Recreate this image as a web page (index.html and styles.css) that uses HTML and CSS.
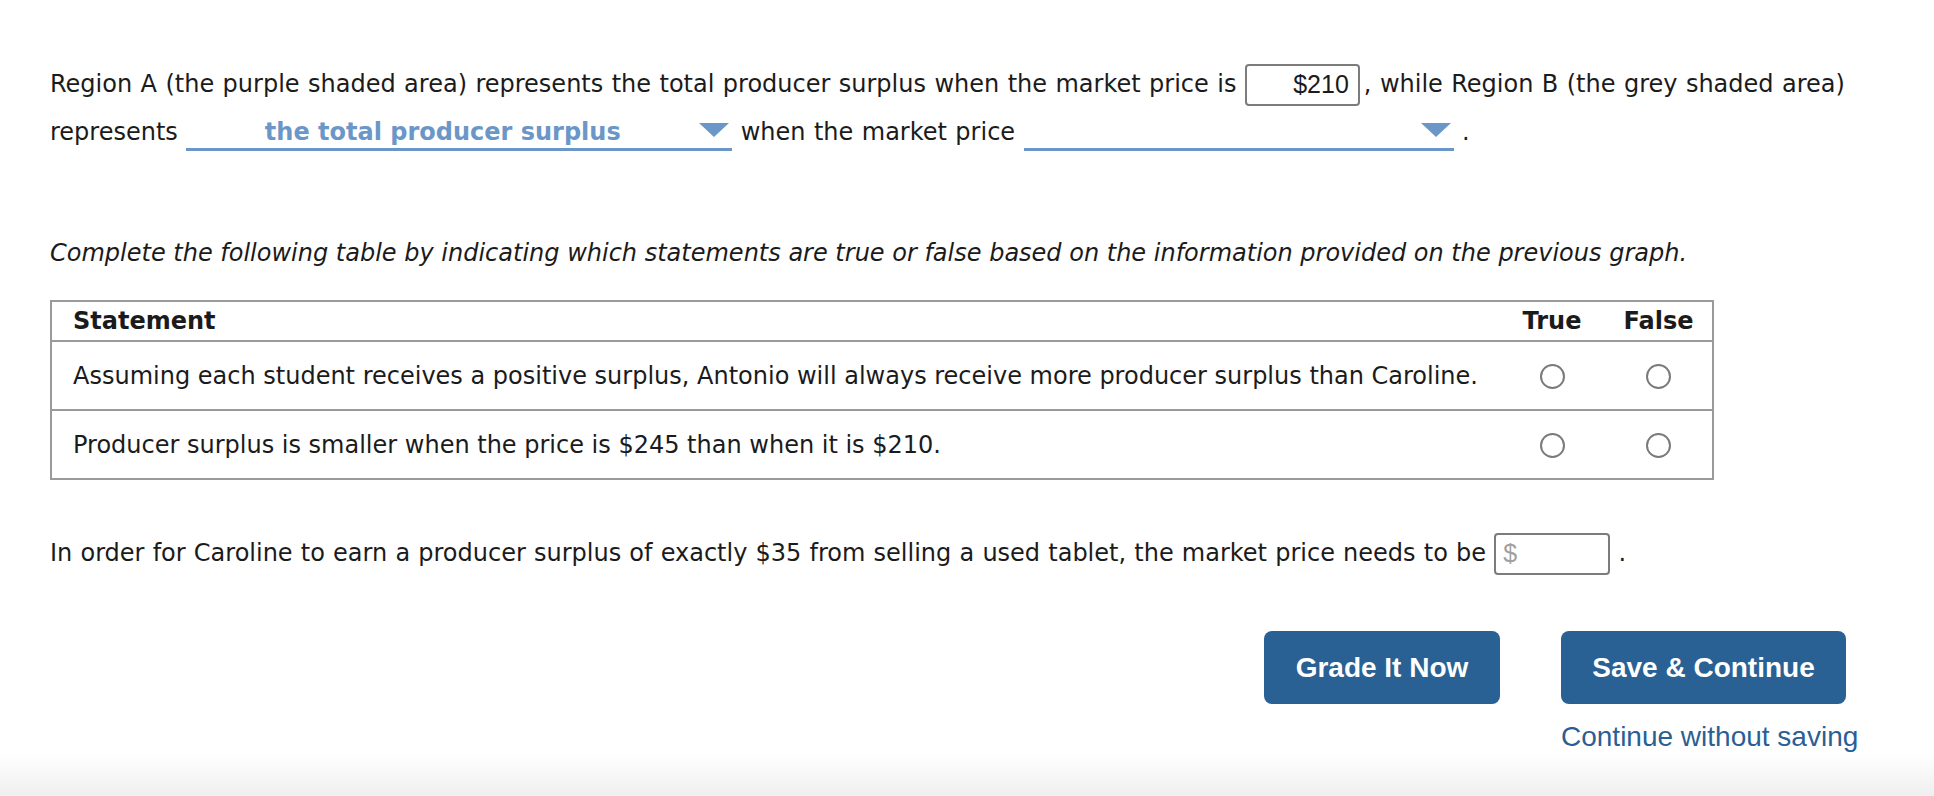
FILE: index.html
```html
<!DOCTYPE html>
<html lang="en">
<head>
<meta charset="utf-8">
<title>Producer surplus</title>
<link rel="stylesheet" href="styles.css">
</head>
<body>
<div class="page">
  <p class="q1">Region A (the purple shaded area) represents the total producer surplus when the market price is <span class="numbox">$210</span>, while Region B (the grey shaded area) represents <span class="dropdown dd1"><span class="dd-text">the total producer surplus</span><span class="caret"></span></span> when the market price <span class="dropdown dd2"><span class="dd-text">&nbsp;</span><span class="caret"></span></span> .</p>

  <p class="instr">Complete the following table by indicating which statements are true or false based on the information provided on the previous graph.</p>

  <table class="tf-table">
    <thead>
      <tr class="head-row">
        <th class="stmt">Statement</th>
        <th class="tf">True</th>
        <th class="tf tf-false">False</th>
      </tr>
    </thead>
    <tbody>
      <tr class="body-row">
        <td class="stmt">Assuming each student receives a positive surplus, Antonio will always receive more producer surplus than Caroline.</td>
        <td class="tf"><span class="radio"></span></td>
        <td class="tf tf-false"><span class="radio"></span></td>
      </tr>
      <tr class="body-row">
        <td class="stmt">Producer surplus is smaller when the price is $245 than when it is $210.</td>
        <td class="tf"><span class="radio"></span></td>
        <td class="tf tf-false"><span class="radio"></span></td>
      </tr>
    </tbody>
  </table>

  <p class="q3">In order for Caroline to earn a producer surplus of exactly $35 from selling a used tablet, the market price needs to be <span class="inputbox"><span class="dollar">$</span></span> .</p>

  <div class="actions">
    <button class="btn btn-grade" type="button">Grade It Now</button>
    <div class="save-col">
      <button class="btn btn-save" type="button">Save &amp; Continue</button>
      <a class="skip-link" href="#">Continue without saving</a>
    </div>
  </div>
</div>
</body>
</html>
```

FILE: styles.css
```css
html, body {
  margin: 0;
  padding: 0;
  background: #fff;
}

body {
  font-family: "DejaVu Sans", Verdana, sans-serif;
  font-size: 24px;
  color: #1b1b1b;
}

.page {
  box-sizing: border-box;
  min-height: 796px;
  padding: 60px 0 0 50px;
  background: linear-gradient(to bottom, #ffffff 0, #ffffff calc(100% - 42px), #efefef 100%);
}

.q1 {
  margin: 0;
  width: 1810px;
  line-height: 48px;
  word-spacing: 0.8px;
}

.numbox {
  display: inline-block;
  box-sizing: border-box;
  width: 115px;
  height: 42px;
  border: 2px solid #7c7c7c;
  border-radius: 4px;
  padding-right: 9px;
  margin-right: 4px;
  font-family: "Liberation Sans", Arial, sans-serif;
  font-size: 25px;
  line-height: 37px;
  text-align: right;
  vertical-align: middle;
  color: #1b1b1b;
}

.dropdown {
  display: inline-flex;
  box-sizing: border-box;
  align-items: flex-end;
  line-height: 26px;
  padding-bottom: 3px;
  border-bottom: 3px solid #6a97c7;
  word-spacing: 0;
}

.dd1 {
  width: 546px;
}

.dd2 {
  width: 430px;
}

.dd-text {
  flex: 1;
  text-align: center;
  font-weight: bold;
  color: #6a97c7;
}

.caret {
  width: 0;
  height: 0;
  border-left: 15px solid transparent;
  border-right: 15px solid transparent;
  border-top: 14px solid #6a97c7;
  margin: 0 3px 8px 0;
}

.instr {
  margin: 73px 0 0;
  line-height: 48px;
  font-style: italic;
}

.tf-table {
  margin-top: 23px;
  width: 1664px;
  border-collapse: collapse;
  border: 2px solid #9a9a9a;
}

.tf-table th,
.tf-table td {
  padding: 0;
  border-bottom: 2px solid #9a9a9a;
}

.head-row {
  height: 40px;
}

.body-row {
  height: 69px;
}

.tf-table th {
  font-weight: bold;
}

.stmt {
  text-align: left;
  padding-left: 21px !important;
}

.tf {
  width: 106px;
  text-align: center;
}

.tf-false {
  width: 107px;
}

.radio {
  display: inline-block;
  box-sizing: border-box;
  width: 25px;
  height: 25px;
  border: 2px solid #7a7a7a;
  border-radius: 50%;
  vertical-align: middle;
}

.q3 {
  margin: 49px 0 0;
  line-height: 48px;
  word-spacing: 0.55px;
}

.inputbox {
  display: inline-block;
  box-sizing: border-box;
  width: 116px;
  height: 42px;
  border: 2px solid #7c7c7c;
  border-radius: 4px;
  padding-left: 7px;
  vertical-align: middle;
  font-family: "Liberation Sans", Arial, sans-serif;
  font-size: 25px;
  line-height: 37px;
}

.dollar {
  color: #a0a0a0;
}

.actions {
  margin-top: 54px;
  width: 1806px;
  display: flex;
  justify-content: flex-end;
  align-items: flex-start;
  gap: 61px;
}

.btn {
  display: flex;
  align-items: center;
  justify-content: center;
  height: 73px;
  border: none;
  border-radius: 8px;
  background: #296194;
  color: #fff;
  font-family: "Liberation Sans", Arial, sans-serif;
  font-weight: bold;
  font-size: 28px;
  padding: 0;
}

.btn-grade {
  width: 236px;
}

.btn-save {
  width: 285px;
}

.save-col {
  display: flex;
  flex-direction: column;
  align-items: flex-start;
  width: 295px;
}

.skip-link {
  margin-top: 17px;
  font-family: "Liberation Sans", Arial, sans-serif;
  font-size: 28px;
  line-height: 32px;
  color: #2a5f95;
  text-decoration: none;
  white-space: nowrap;
}
```
